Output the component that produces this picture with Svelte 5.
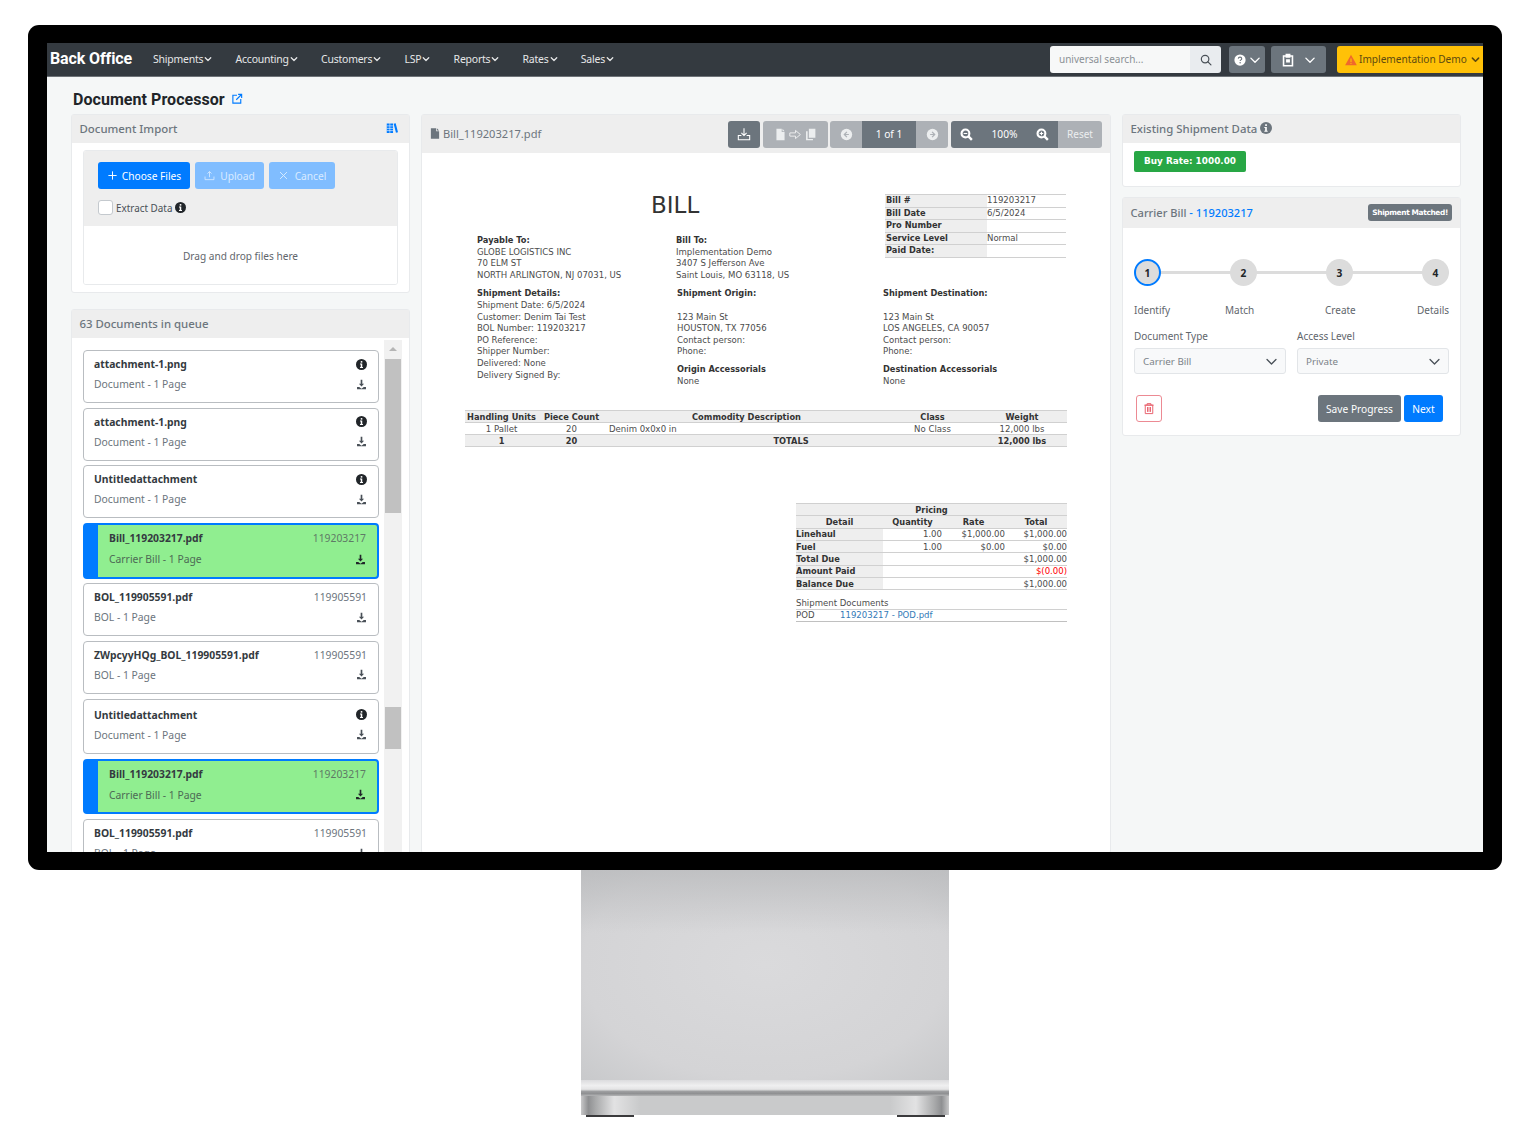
<script>
  const navItems = ['Shipments', 'Accounting', 'Customers', 'LSP', 'Reports', 'Rates', 'Sales'];

  const queue = [
    { name: 'attachment-1.png', sub: 'Document - 1 Page', info: true },
    { name: 'attachment-1.png', sub: 'Document - 1 Page', info: true },
    { name: 'Untitledattachment', sub: 'Document - 1 Page', info: true },
    { name: 'Bill_119203217.pdf', sub: 'Carrier Bill - 1 Page', ref: '119203217', active: true },
    { name: 'BOL_119905591.pdf', sub: 'BOL - 1 Page', ref: '119905591' },
    { name: 'ZWpcyyHQg_BOL_119905591.pdf', sub: 'BOL - 1 Page', ref: '119905591' },
    { name: 'Untitledattachment', sub: 'Document - 1 Page', info: true, tall: true },
    { name: 'Bill_119203217.pdf', sub: 'Carrier Bill - 1 Page', ref: '119203217', active: true },
    { name: 'BOL_119905591.pdf', sub: 'BOL - 1 Page', ref: '119905591' }
  ];

  const steps = ['Identify', 'Match', 'Create', 'Details'];

  const pricing = [
    { label: 'Linehaul', qty: '1.00', rate: '$1,000.00', total: '$1,000.00' },
    { label: 'Fuel', qty: '1.00', rate: '$0.00', total: '$0.00' },
    { label: 'Total Due', qty: '', rate: '', total: '$1,000.00' },
    { label: 'Amount Paid', qty: '', rate: '', total: '$(0.00)', red: true },
    { label: 'Balance Due', qty: '', rate: '', total: '$1,000.00' }
  ];
</script>

{#snippet chevron(size, width)}
  <svg class="chev" style="width:{size}px;height:{size}px" viewBox="0 0 16 16" fill="none" stroke="currentColor" stroke-width={width} stroke-linecap="round" stroke-linejoin="round"><path d="M2.5 5.5 8 11l5.5-5.5"/></svg>
{/snippet}

{#snippet info(size, color)}
  <svg style="width:{size}px;height:{size}px;color:{color}" viewBox="0 0 16 16"><circle cx="8" cy="8" r="8" fill="currentColor"/><rect x="6.9" y="3" width="2.3" height="2.3" fill="#fff"/><path d="M5.8 6.6h3.3v5h1.1v1.4H5.8v-1.4h1.1V8H5.8z" fill="#fff"/></svg>
{/snippet}

{#snippet download(size)}
  <svg style="width:{size}px;height:{size}px" viewBox="0 0 16 16" fill="currentColor"><path d="M6.8 1h2.4v6h2.6L8 11 4.2 7h2.6z"/><path d="M1.5 11.5h3.2L8 14l3.3-2.5h3.2V15h-13z"/></svg>
{/snippet}

{#snippet zoomIcon(minus)}
  <svg class="btn-icon tool-icon" viewBox="0 0 16 16" fill="none" stroke="currentColor"><circle cx="6.7" cy="6.7" r="4.8" stroke-width="2.6"/><path d="m10.4 10.4 4.2 4.2" stroke-width="3"/><path d={minus ? 'M4.5 6.7h4.4' : 'M4.5 6.7h4.4M6.7 4.5v4.4'} stroke-width="1.4"/></svg>
{/snippet}

{#snippet arrowCircle(dir)}
  <svg class="btn-icon tool-icon" viewBox="0 0 16 16"><circle cx="8" cy="8" r="7" fill="currentColor"/><path d={dir === 'left' ? 'M8.5 4.8 5.3 8l3.2 3.2M5.5 8h5.4' : 'M7.5 4.8 10.7 8l-3.2 3.2M10.5 8H5.1'} fill="none" stroke="#adb1b6" stroke-width="1.5"/></svg>
{/snippet}

<div class="page">
  <div class="bezel">
    <div class="screen">
      <nav class="navbar">
        <a class="brand" href="./">Back Office</a>
        <ul class="menu">
          {#each navItems as item}
            <li>{item}{@render chevron(8, 2.6)}</li>
          {/each}
        </ul>
        <div class="nav-right">
          <div class="search">
            <span class="search-input">universal search...</span>
            <span class="search-btn">
              <svg viewBox="0 0 16 16" fill="none" stroke="currentColor" stroke-width="1.6"><circle cx="6.8" cy="6.8" r="5"/><path d="m10.6 10.6 4 4" stroke-linecap="round"/></svg>
            </span>
          </div>
          <span class="nav-btn help">
            <svg class="nav-icon" viewBox="0 0 16 16"><circle cx="8" cy="8" r="7.5" fill="#fff"/><path d="M5.7 6.2C5.8 4.9 6.8 4.2 8 4.2c1.3 0 2.3.8 2.3 2 0 1.7-2.1 1.6-2.1 3.1" fill="none" stroke="#6c757d" stroke-width="1.5"/><circle cx="8.2" cy="11.6" r="1" fill="#6c757d"/></svg>
            {@render chevron(12, 1.8)}
          </span>
          <span class="nav-btn clip">
            <svg class="clip-icon" viewBox="0 0 16 16" fill="#fff"><path fill-rule="evenodd" d="M2 2.5h3.2V.8h5.6v1.700H14V15.500H2zM3.800 4.200v9.600h8.400V4.200h-1.400v1.200H5.200V4.200zM5.800 7h4.400v3.800H5.800z"/></svg>
            {@render chevron(12, 1.8)}
          </span>
          <span class="demo">
            <svg class="warn" viewBox="0 0 16 16"><path d="M8 1 15.8 15H.2z" fill="#f0682c"/><path d="M8 6v4.500" stroke="#ffc107" stroke-width="1.5"/><circle cx="8" cy="12.4" r=".9" fill="#ffc107"/></svg>
            Implementation Demo
            {@render chevron(9, 2.8)}
          </span>
        </div>
      </nav>

      <main class="content">
        <h1>
          Document Processor
          <svg class="ext" viewBox="0 0 16 16" fill="none" stroke="#007bff" stroke-width="1.5"><path d="M8 3H2.500v10.500H13V8"/><path d="M7 9l7-7M9.500 1.800h4.700v4.700"/></svg>
        </h1>

        <div class="columns">
          <div class="col-side">
            <section class="card import-card">
              <header class="card-head">
                <span>Document Import</span>
                <svg class="books" viewBox="0 0 16 16" fill="#007bff"><path d="M1 2h3.800v12.500H1zM5.600 2h3.800v12.500H5.600zM10.200 2.400l2.700-.8 3.100 12-2.700.8z"/><path d="M1 5.200h8.400M1 8.500h8.400M1 11.500h8.400" stroke="#fff" stroke-width=".8"/></svg>
              </header>
              <div class="card-body import-body">
                <div class="uploader">
                  <div class="uploader-bar">
                    <div class="upload-btns">
                      <span class="btn primary choose">
                        <svg class="btn-icon" viewBox="0 0 16 16" stroke="currentColor" stroke-width="1.4"><path d="M8 2v12M2 8h12"/></svg>
                        Choose Files
                      </span>
                      <span class="btn primary faded upload">
                        <svg class="btn-icon" viewBox="0 0 16 16" fill="none" stroke="currentColor" stroke-width="1.2"><path d="M8 10.500V2.500M5 5.200l3-3 3 3M1.500 9.500v4.500h13V9.500"/></svg>
                        Upload
                      </span>
                      <span class="btn primary faded cancel">
                        <svg class="btn-icon" viewBox="0 0 16 16" stroke="currentColor" stroke-width="1.4"><path d="m3 3 10 10M13 3 3 13"/></svg>
                        Cancel
                      </span>
                    </div>
                    <label class="extract">
                      <span class="checkbox"></span>
                      Extract Data
                      {@render info(11, '#212529')}
                    </label>
                  </div>
                  <div class="dropzone">Drag and drop files here</div>
                </div>
              </div>
            </section>

            <section class="card queue-card">
              <header class="card-head"><span>63 Documents in queue</span></header>
              <div class="queue-body">
                <ul class="queue">
                  {#each queue as doc}
                    <li class="doc" class:active={doc.active} class:tall={doc.tall}>
                      <div class="doc-row">
                        <strong>{doc.name}</strong>
                        {#if doc.info}
                          {@render info(11, '#212529')}
                        {:else}
                          <span class="doc-ref">{doc.ref}</span>
                        {/if}
                      </div>
                      <div class="doc-row sub">
                        <span>{doc.sub}</span>
                        <span class="doc-dl">{@render download(11)}</span>
                      </div>
                    </li>
                  {/each}
                </ul>
                <div class="scrollbar">
                  <span class="scroll-up"></span>
                  <span class="thumb first"></span>
                  <span class="thumb second"></span>
                </div>
              </div>
            </section>
          </div>

          <section class="card viewer">
            <header class="viewer-head">
              <span class="file-name">
                <svg viewBox="0 0 16 16" fill="currentColor"><path d="M2.500 1h7v4h4v10h-11zM10.500 1l3 3h-3z"/></svg>
                Bill_119203217.pdf
              </span>
              <div class="tools">
                <span class="tool dark one">
                  <svg class="btn-icon big" viewBox="0 0 16 16" fill="none" stroke="currentColor" stroke-width="1.2"><path d="M8 1.500v8M5 6.800l3 3 3-3M5 9.800H1.500v4.700h13V9.800H11"/></svg>
                </span>
                <span class="tool light convert">
                  <svg class="tool-icon" viewBox="0 0 16 16" fill="currentColor"><path d="M3 1h6.500v4H13v10H3zM10.500 1 13 4h-2.500z"/></svg>
                  <svg class="tool-icon" viewBox="0 0 16 16" fill="none" stroke="currentColor" stroke-width="1.2"><path d="M1 6h7V3l6 5-6 5v-3H1z"/></svg>
                  <svg class="tool-icon" viewBox="0 0 16 16" fill="currentColor"><path d="M6 1h8v11H6zM2.500 4H4.500v9.500H11V15H2.500z"/></svg>
                </span>
                <div class="tool-group pager">
                  <span class="tool light arrow">{@render arrowCircle('left')}</span>
                  <span class="tool dark pages">1 of 1</span>
                  <span class="tool light arrow">{@render arrowCircle('right')}</span>
                </div>
                <div class="tool-group">
                  <span class="tool dark zoom-part">
                    {@render zoomIcon(true)}
                    <span>100%</span>
                    {@render zoomIcon(false)}
                  </span>
                  <span class="tool light reset">Reset</span>
                </div>
              </div>
            </header>

            <article class="bill">
              <div class="bill-top">
                <h2>BILL</h2>
                <table class="meta">
                  <tbody>
                    <tr><th>Bill #</th><td>119203217</td></tr>
                    <tr><th>Bill Date</th><td>6/5/2024</td></tr>
                    <tr><th>Pro Number</th><td></td></tr>
                    <tr><th>Service Level</th><td>Normal</td></tr>
                    <tr><th>Paid Date:</th><td></td></tr>
                  </tbody>
                </table>
              </div>

              <div class="parties">
                <div>
                  <b>Payable To:</b><br />GLOBE LOGISTICS INC<br />70 ELM ST<br />NORTH ARLINGTON, NJ 07031, US
                </div>
                <div>
                  <b>Bill To:</b><br />Implementation Demo<br />3407 S Jefferson Ave<br />Saint Louis, MO 63118, US
                </div>
              </div>

              <div class="details">
                <div>
                  <b>Shipment Details:</b><br />Shipment Date: 6/5/2024<br />Customer: Denim Tai Test<br />BOL Number: 119203217<br />PO Reference:<br />Shipper Number:<br />Delivered: None<br />Delivery Signed By:
                </div>
                <div>
                  <b>Shipment Origin:</b><br /><br />123 Main St<br />HOUSTON, TX 77056<br />Contact person:<br />Phone:
                  <p><b>Origin Accessorials</b><br />None</p>
                </div>
                <div>
                  <b>Shipment Destination:</b><br /><br />123 Main St<br />LOS ANGELES, CA 90057<br />Contact person:<br />Phone:
                  <p><b>Destination Accessorials</b><br />None</p>
                </div>
              </div>

              <table class="items">
                <colgroup><col style="width:73px" /><col style="width:67px" /><col style="width:283px" /><col style="width:89px" /><col style="width:90px" /></colgroup>
                <thead>
                  <tr><th>Handling Units</th><th>Piece Count</th><th>Commodity Description</th><th>Class</th><th>Weight</th></tr>
                </thead>
                <tbody>
                  <tr><td>1 Pallet</td><td>20</td><td class="left">Denim 0x0x0 in</td><td>No Class</td><td>12,000 lbs</td></tr>
                  <tr class="totals"><td>1</td><td>20</td><td colspan="2">TOTALS</td><td>12,000 lbs</td></tr>
                </tbody>
              </table>

              <div class="bill-bottom">
                <table class="pricing">
                  <colgroup><col style="width:87px" /><col style="width:59px" /><col style="width:63px" /><col style="width:62px" /></colgroup>
                  <thead>
                    <tr><th colspan="4">Pricing</th></tr>
                    <tr><th>Detail</th><th>Quantity</th><th>Rate</th><th>Total</th></tr>
                  </thead>
                  <tbody>
                    {#each pricing as row}
                      <tr>
                        <th class="left">{row.label}</th>
                        <td>{row.qty}</td>
                        <td>{row.rate}</td>
                        <td class:red={row.red}>{row.total}</td>
                      </tr>
                    {/each}
                  </tbody>
                </table>
                <div class="ship-docs">Shipment Documents</div>
                <div class="pod"><span>POD</span><a href="./">119203217 - POD.pdf</a></div>
              </div>
            </article>
          </section>

          <div class="col-side">
            <section class="card existing">
              <header class="card-head">
                <span class="with-icon">Existing Shipment Data {@render info(12, '#6c757d')}</span>
              </header>
              <div class="existing-body"><span class="rate">Buy Rate: 1000.00</span></div>
            </section>

            <section class="card wizard">
              <header class="card-head wizard-head">
                <span>Carrier Bill <span class="blue">- 119203217</span></span>
                <span class="matched">Shipment Matched!</span>
              </header>
              <div class="wizard-body">
                <div class="stepper">
                  {#each steps as _, i}
                    <span class="step" class:current={i === 0}>{i + 1}</span>
                  {/each}
                </div>
                <div class="step-labels">
                  {#each steps as label}<span>{label}</span>{/each}
                </div>
                <div class="fields">
                  <div class="field">
                    <span class="field-label">Document Type</span>
                    <span class="select">Carrier Bill {@render chevron(13, 1.6)}</span>
                  </div>
                  <div class="field">
                    <span class="field-label">Access Level</span>
                    <span class="select">Private {@render chevron(13, 1.6)}</span>
                  </div>
                </div>
                <div class="actions">
                  <span class="trash">
                    <svg viewBox="0 0 16 16" fill="none" stroke="currentColor" stroke-width="1.3"><path d="M1.800 3.500h12.400M5.500 3.300V1.500h5v1.800M3 3.500h10v11.300H3zM6 6v6.500M8 6v6.500M10 6v6.500"/></svg>
                  </span>
                  <div class="action-right">
                    <span class="btn save">Save Progress</span>
                    <span class="btn primary next">Next</span>
                  </div>
                </div>
              </div>
            </section>
          </div>
        </div>
      </main>
    </div>
  </div>

  <div class="stand">
    <div class="stand-neck"></div>
    <div class="stand-lip"></div>
    <div class="stand-base"></div>
    <div class="stand-feet"><span></span><span></span></div>
  </div>
</div>

<style>
  :global(body) {
    background: #fff;
    font-family: "Noto Sans", "Open Sans", sans-serif;
  }

  * {
    box-sizing: border-box;
  }

  .page {
    width: 1536px;
    height: 1131px;
    padding: 25px 0 0 28px;
    overflow: hidden;
  }

  .bezel {
    width: 1474px;
    height: 845px;
    padding: 18px 19px;
    background: #000;
    border-radius: 11px;
  }

  .screen {
    width: 1436px;
    height: 809px;
    background: #f5f7f7;
    overflow: hidden;
  }

  /* navbar */
  .navbar {
    display: flex;
    align-items: center;
    height: 34px;
    background: #343a40;
    border-bottom: 1px solid #6e7378;
    color: #fff;
  }

  .brand {
    margin: -2px 0 0 3px;
    font-family: Roboto, sans-serif;
    font-size: 16px;
    font-weight: 700;
    color: #fff;
    text-decoration: none;
    letter-spacing: -0.12px;
  }

  .menu {
    display: flex;
    gap: 23.2px;
    margin: -1px 0 0 21px;
    padding: 0;
    list-style: none;
    font-size: 10.45px;
    color: #e6e7e8;
    letter-spacing: -0.2px;
  }

  .menu li {
    display: flex;
    align-items: center;
    gap: 1px;
  }

  .nav-right {
    display: flex;
    align-items: center;
    margin-left: auto;
    height: 27px;
  }

  .search {
    display: flex;
    width: 171px;
    height: 27px;
    border-radius: 3px;
    overflow: hidden;
    font-size: 10px;
  }

  .search-input {
    display: flex;
    align-items: center;
    width: 140px;
    padding: 0 0 2px 9px;
    background: #f7f8f8;
    color: #8b9196;
  }

  .search-btn {
    display: flex;
    align-items: center;
    justify-content: center;
    width: 31px;
    background: #e9ecef;
    color: #495057;
  }

  .search-btn svg {
    width: 12px;
    height: 12px;
  }

  .nav-btn {
    display: flex;
    align-items: center;
    justify-content: center;
    height: 27px;
    background: #6c757d;
    border-radius: 3px;
  }

  .help {
    width: 36px;
    gap: 3px;
    margin-left: 8px;
  }

  .clip {
    width: 55px;
    gap: 9px;
    margin-left: 6px;
  }

  .nav-icon {
    width: 12px;
    height: 12px;
  }

  .clip-icon {
    width: 14px;
    height: 14px;
  }

  .demo {
    display: flex;
    align-items: center;
    gap: 2px;
    width: 146px;
    height: 27px;
    margin-left: 11px;
    padding: 0 0 2px 8px;
    background: #ffc107;
    border-radius: 3px 0 0 3px;
    color: #5d4a10;
    font-size: 10.1px;
    white-space: nowrap;
  }

  .warn {
    width: 12px;
    height: 12px;
    margin-top: 2px;
  }

  .demo .chev {
    margin: 2px 0 0 2px;
  }

  /* page content */
  .content {
    padding: 0 22px 0 24px;
  }

  h1 {
    display: flex;
    align-items: center;
    gap: 6px;
    height: 37px;
    margin: 0;
    padding: 7px 2px 0;
    font-family: Roboto, sans-serif;
    font-size: 16px;
    font-weight: 700;
    letter-spacing: 0.05px;
    color: #212529;
  }

  .ext {
    width: 12px;
    height: 12px;
  }

  .columns {
    display: grid;
    grid-template-columns: 339px 690px 339px;
    gap: 11px;
    align-items: start;
  }

  .col-side {
    display: flex;
    flex-direction: column;
    gap: 10px;
  }

  .col-side:first-child {
    gap: 16px;
  }

  .card {
    background: #fff;
    border: 1px solid #e8eaec;
    border-radius: 3px;
  }

  .card-head {
    display: flex;
    align-items: center;
    justify-content: space-between;
    height: 28px;
    padding: 0 8px 2px 7.5px;
    background: #eee;
    font-size: 11.4px;
    font-weight: 500;
    color: #6c757d;
  }

  .books {
    width: 12px;
    height: 12px;
    margin-right: 3px;
  }

  .import-body {
    padding: 7px 11px 7px;
  }

  .uploader {
    border: 1px solid #e8eaec;
    border-radius: 3px;
    overflow: hidden;
  }

  .uploader-bar {
    height: 75px;
    padding: 11px 14px 0;
    background: #eee;
  }

  .upload-btns {
    display: flex;
    gap: 5px;
  }

  .btn {
    display: inline-flex;
    align-items: center;
    justify-content: center;
    height: 27px;
    border-radius: 3px;
    font-size: 10.2px;
    color: #fff;
    white-space: nowrap;
  }

  .primary {
    background: #007bff;
  }

  .faded {
    background: #80bdff;
    color: #d9ebff;
  }

  .choose {
    width: 92px;
    gap: 4px;
  }

  .upload {
    width: 69px;
    gap: 5px;
  }

  .cancel {
    width: 66px;
    gap: 6px;
  }

  .btn-icon {
    width: 11px;
    height: 11px;
  }

  .btn-icon.big {
    width: 14px;
    height: 14px;
  }

  .extract {
    display: flex;
    align-items: center;
    gap: 3px;
    margin-top: 11px;
    font-size: 9.9px;
    color: #495057;
  }

  .checkbox {
    width: 15px;
    height: 15px;
    background: #fff;
    border: 1px solid #c4c9ce;
    border-radius: 3px;
  }

  .dropzone {
    display: flex;
    align-items: center;
    justify-content: center;
    height: 58px;
    padding-top: 1px;
    background: #fff;
    font-size: 10.1px;
    color: #5f666c;
  }

  .queue-card {
    height: 560px;
  }

  .queue-body {
    display: flex;
    align-items: flex-start;
    height: 515px;
    overflow: hidden;
  }

  .queue {
    width: 296px;
    margin: 12px 0 0 11px;
    padding: 0;
    list-style: none;
    display: flex;
    flex-direction: column;
    gap: 4.7px;
  }

  .doc {
    flex: none;
    height: 53px;
    padding: 5px 11px 0 10px;
    background: #fff;
    border: 1px solid #b9bdc1;
    border-radius: 4px;
    font-size: 10.35px;
  }

  .doc.tall {
    height: 55.5px;
    padding-top: 7px;
  }

  .doc.active {
    height: 55.5px;
    padding: 5px 11px 0 24px;
    background: linear-gradient(90deg, #007bff 13px, #90ee90 13px);
    border: 2px solid #007bff;
  }

  .doc-row {
    display: flex;
    align-items: center;
    justify-content: space-between;
    height: 16px;
    color: #212529;
  }

  .doc-row.sub {
    margin-top: 4px;
    color: #6c757d;
  }

  .doc.active .doc-row.sub {
    margin-top: 5px;
    color: #4d6b55;
  }

  .doc-row strong {
    font-weight: 700;
    color: #343a40;
  }

  .doc-ref {
    color: #6c757d;
  }

  .doc.active .doc-ref {
    color: #5f7a66;
  }

  .doc-dl {
    display: flex;
    color: #495057;
  }

  .doc.active .doc-dl {
    color: #212529;
  }

  .doc-row svg {
    flex: none;
  }

  .scrollbar {
    display: flex;
    flex-direction: column;
    align-items: center;
    width: 18px;
    height: 515px;
    margin: 2px 0 0 5px;
    background: #f1f1f1;
  }

  .scroll-up {
    width: 0;
    height: 0;
    margin-top: 7px;
    border: 4px solid transparent;
    border-top: 0;
    border-bottom: 4px solid #b5b5b5;
  }

  .thumb {
    width: 16px;
    background: #c1c1c1;
  }

  .thumb.first {
    height: 154px;
    margin-top: 8px;
  }

  .thumb.second {
    height: 42px;
    margin-top: 194px;
  }

  /* pdf viewer */
  .viewer {
    height: 740px;
  }

  .viewer-head {
    display: flex;
    align-items: center;
    justify-content: space-between;
    height: 38px;
    padding: 0 8px 0 7px;
    background: #eee;
  }

  .file-name {
    display: flex;
    align-items: center;
    gap: 2px;
    padding-bottom: 1px;
    font-size: 11.1px;
    color: #6c757d;
  }

  .file-name svg {
    width: 12px;
    height: 13px;
  }

  .tools {
    display: flex;
    gap: 3px;
    color: #fff;
    font-size: 10.2px;
  }

  .tool {
    display: flex;
    align-items: center;
    justify-content: center;
    height: 27px;
  }

  .tool.dark {
    background: #6c757d;
  }

  .tool.light {
    background: #adb1b6;
    color: #eceeef;
  }

  .tool.one {
    width: 32px;
    border-radius: 3px;
  }

  .tool.convert {
    width: 65px;
    gap: 2px;
    border-radius: 3px;
  }

  .tool-icon {
    width: 13px;
    height: 13px;
  }

  .tool-group {
    display: flex;
    border-radius: 3px;
    overflow: hidden;
  }

  .pager {
    margin-left: -1px;
  }

  .arrow {
    width: 32px;
  }

  .pages {
    width: 54px;
  }

  .zoom-part {
    width: 107px;
    justify-content: space-between;
    padding: 0 9px;
  }

  .reset {
    width: 44px;
    font-size: 10px;
  }

  /* bill document */
  .bill {
    padding: 39px 44px 0 43px;
    font-family: "DejaVu Sans", sans-serif;
    font-size: 8.55px;
    line-height: 11.6px;
    color: #4c4c4c;
  }

  .bill b,
  .bill th {
    font-size: 8.25px;
    font-weight: 700;
    color: #333;
  }

  .bill-top {
    display: flex;
    justify-content: flex-end;
    align-items: flex-start;
    height: 43px;
    position: relative;
  }

  .bill-top h2 {
    position: absolute;
    left: 186px;
    top: 0;
    margin: 0;
    font-family: "DejaVu Sans", sans-serif;
    font-size: 23px;
    font-weight: 400;
    line-height: 26px;
    color: #333;
  }

  table {
    border-collapse: collapse;
    border-spacing: 0;
    table-layout: fixed;
  }

  th,
  td {
    padding: 0;
    border-top: 1px solid #d0d0d0;
    border-bottom: 1px solid #d0d0d0;
  }

  .meta {
    width: 181px;
    margin-top: 2px;
  }

  .meta tr {
    height: 12.4px;
  }

  .meta th {
    width: 102px;
    background: #eee;
    text-align: left;
    padding-left: 1px;
  }

  .parties,
  .details {
    display: grid;
    padding-left: 12px;
  }

  .parties {
    grid-template-columns: 199px 1fr;
  }

  .details {
    grid-template-columns: 200px 206px 1fr;
    margin-top: 7px;
  }

  .details p {
    margin: 6px 0 0;
  }

  .items {
    width: 602px;
    margin-top: 23px;
    text-align: center;
  }

  .items tr {
    height: 12px;
  }

  .items th,
  .items td {
    line-height: 10px;
  }

  .items thead th {
    background: #eee;
  }

  .items td.left {
    text-align: left;
    padding-left: 4px;
  }

  .items .totals td {
    background: #eee;
    font-size: 8.25px;
    font-weight: 700;
    color: #333;
  }

  .bill-bottom {
    width: 271px;
    margin: 56px 0 0 331px;
  }

  .pricing {
    width: 271px;
  }

  .pricing tr {
    height: 12.3px;
  }

  .pricing th,
  .pricing td {
    line-height: 10px;
  }

  .pricing thead th {
    background: #eee;
    text-align: center;
  }

  .pricing th.left {
    background: #eee;
    text-align: left;
  }

  .pricing td {
    text-align: right;
  }

  .pricing td.red {
    color: #f00;
  }

  .ship-docs {
    height: 12px;
    margin-top: 8px;
    border-bottom: 1px solid #d0d0d0;
  }

  .pod {
    display: flex;
    height: 12px;
    line-height: 11px;
    border-bottom: 1px solid #c0c0c0;
  }

  .pod span {
    width: 44px;
  }

  .pod a {
    color: #337ab7;
    text-decoration: none;
  }

  /* right column */
  .with-icon {
    display: inline-flex;
    align-items: center;
    gap: 3px;
  }

  .existing-body {
    height: 43px;
    padding: 8px 11px;
  }

  .rate {
    display: block;
    width: 112px;
    height: 21px;
    background: #28a745;
    border-radius: 2px;
    color: #fff;
    font-family: "DejaVu Sans", sans-serif;
    font-size: 8.9px;
    font-weight: 700;
    line-height: 20px;
    text-align: center;
  }

  .wizard-head {
    height: 30px;
    font-size: 11.1px;
  }

  .blue {
    color: #007bff;
  }

  .matched {
    padding: 0 4px;
    height: 17px;
    background: #6c757d;
    border-radius: 3px;
    color: #fff;
    font-family: "DejaVu Sans", sans-serif;
    font-size: 7.4px;
    font-weight: 700;
    line-height: 17px;
    letter-spacing: -0.35px;
  }

  .wizard-body {
    padding: 31px 11px 13px;
  }

  .stepper {
    display: flex;
    justify-content: space-between;
    background: linear-gradient(#dcdcdc, #dcdcdc) center / 100% 3px no-repeat;
  }

  .step {
    display: flex;
    align-items: center;
    justify-content: center;
    width: 27px;
    height: 27px;
    background: #dcdcdc;
    border-radius: 50%;
    font-size: 10.2px;
    font-weight: 700;
    color: #212529;
  }

  .step.current {
    border: 2px solid #007bff;
  }

  .step-labels {
    display: grid;
    grid-template-columns: 91px 100px 92px 1fr;
    margin-top: 17px;
    font-size: 10px;
    line-height: 15px;
    color: #5f666c;
  }

  .fields {
    display: grid;
    grid-template-columns: 152px 152px;
    justify-content: space-between;
    margin-top: 11px;
  }

  .field-label {
    display: block;
    font-size: 10px;
    line-height: 15px;
    color: #5f666c;
  }

  .select {
    display: flex;
    align-items: center;
    justify-content: space-between;
    height: 26px;
    margin-top: 4px;
    padding: 0 7px 0 8px;
    background: #f8f9fa;
    border: 1px solid #e2e5e8;
    border-radius: 3px;
    font-size: 9.8px;
    color: #7b8288;
  }

  .select .chev {
    color: #495057;
  }

  .actions {
    display: flex;
    align-items: center;
    justify-content: space-between;
    margin-top: 21px;
    padding: 0 6px 0 2px;
  }

  .trash {
    display: flex;
    align-items: center;
    justify-content: center;
    width: 26px;
    height: 27px;
    border: 1px solid #ec8a93;
    border-radius: 3px;
    color: #e8616d;
  }

  .trash svg {
    width: 12px;
    height: 13px;
  }

  .action-right {
    display: flex;
    gap: 3px;
  }

  .save {
    width: 83px;
    background: #6c757d;
  }

  .next {
    width: 39px;
  }

  /* stand */
  .stand {
    width: 368px;
    margin-left: 553px;
  }

  .stand-neck {
    height: 210px;
    background:
      linear-gradient(#b9babcc0, #b9babc00 30%),
      radial-gradient(ellipse at 50% 45%, #dadadc, #d4d4d6 70%, #c8c9cb);
  }

  .stand-lip {
    height: 16px;
    background: linear-gradient(#dcdcde, #efeff0 35%, #e4e4e5 58%, #9c9d9f 72%, #8f9092 85%, #b4b5b6);
  }

  .stand-base {
    height: 19px;
    background: linear-gradient(90deg, #c8c8c9, #8f9092 2%, #a9aaab 4%, #e2e2e3 9%, #c9cacb 16%, #c9cacb 84%, #e2e2e3 91%, #a9aaab 96%, #8f9092 98%, #c8c8c9);
  }

  .stand-feet {
    display: flex;
    justify-content: space-between;
    padding: 0 4px 0 5px;
  }

  .stand-feet span {
    width: 48px;
    height: 2px;
    background: #3a3a3c;
  }
</style>
